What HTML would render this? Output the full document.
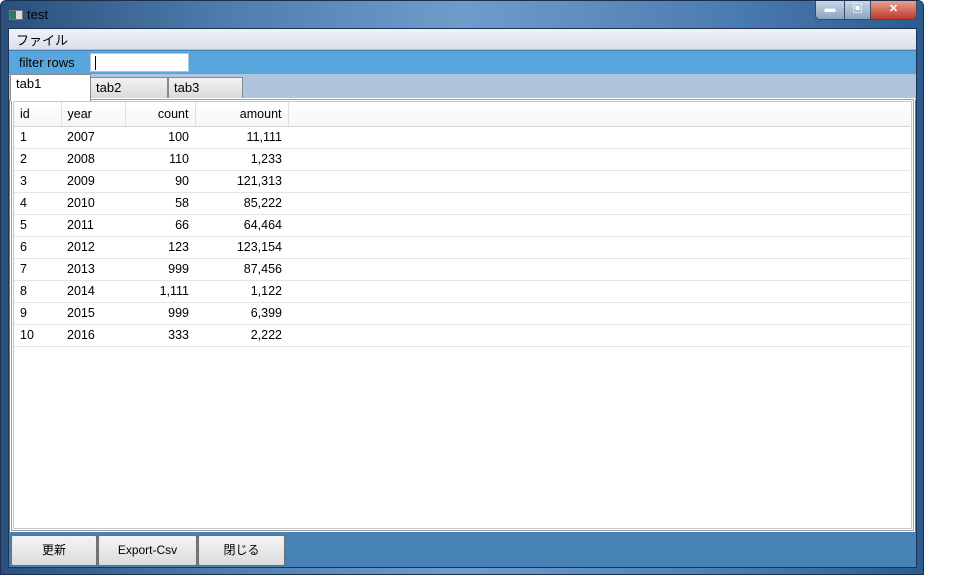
<!DOCTYPE html>
<html><head><meta charset="utf-8"><style>
*{margin:0;padding:0;box-sizing:border-box}
body{width:960px;height:575px;background:#fff;position:relative;overflow:hidden;font-family:"Liberation Sans","Noto Sans CJK JP",sans-serif;font-size:12px;color:#000}
.win{position:absolute;left:0;top:0;width:924px;height:575px;border-radius:6px 6px 0 0;background:linear-gradient(90deg,#2a4f7e 0%,#4f7eae 25%,#6f9ccb 50%,#4a7bb0 80%,#2c5a8e 100%);border:1px solid #1b2f4a}
.title{position:absolute;left:26px;top:6px;font-size:13px;color:#000}
.ico{position:absolute;left:8px;top:9px;width:14px;height:10px;background:linear-gradient(90deg,#2f7a5a 50%,#ddd 50%);border:1px solid #777}
.btns{position:absolute;left:814px;top:0;height:19px;display:flex;border:1px solid #3a4a60;border-top:none;border-radius:0 0 5px 5px;overflow:hidden}
.btns div{height:18px;color:#fff;font-size:11px;text-align:center;line-height:17px;font-weight:bold}
.client{position:absolute;left:7px;top:27px;width:909px;height:540px;background:#4682b4;border:1px solid #1c3552}
.menu{position:absolute;left:0;top:0;width:907px;height:21px;background:linear-gradient(#f0f2f8,#dce0ee);border-bottom:1px solid #b8c0d0;padding:1px 0 0 7px;font-size:13px}
.filter{position:absolute;left:0;top:22px;width:907px;height:24px;background:#57a6de}
.filter span{position:absolute;left:10px;top:4px;font-size:13px}
.filter .in{position:absolute;left:81px;top:2px;width:99px;height:19px;background:#fff;border:1px solid #a9c4dd}
.filter .in i{position:absolute;left:4px;top:2px;width:1px;height:14px;background:#000}
.tabs{position:absolute;left:0;top:45px;width:907px;height:26px;background:#b0c4de}
.tab{position:absolute;top:3px;height:23px;border:1px solid #8a8a8a;border-bottom:none;background:linear-gradient(#f2f2f2,#d8d8d8);font-size:13px;padding:2px 0 0 5px}
.panel{position:absolute;left:2px;top:70px;width:903px;height:432px;background:#fff;border:1px solid #a0a0a0;outline:1px solid #fff;}
.inner{position:absolute;left:1px;top:1px;right:1px;bottom:1px;border:1px solid #c8c8c8}
table{border-collapse:collapse;font-size:12.5px}
th,td{height:22px;font-weight:normal;border-bottom:1px solid #e4e4e4;padding:0 6px}
th{height:24px;background:linear-gradient(#fff,#f4f5f7);border-right:1px solid #e0e0e0;border-bottom:1px solid #d5d5d5}
.r{text-align:right}.l{text-align:left}
.fill{width:622px}
.bb{position:absolute;top:506px;height:31px;border:1px solid #707070;border-radius:2px;background:linear-gradient(#f4f4f4,#dcdcdc);text-align:center;line-height:28px;font-size:12px}
</style></head><body>
<div class="win">
<div class="ico"></div><div class="title">test</div>
<div class="btns">
<div style="width:28px;background:linear-gradient(#c9d6e6,#8aa4c4)">▬</div>
<div style="width:26px;background:linear-gradient(#c9d6e6,#8aa4c4);border-left:1px solid #3a4a60">▣</div>
<div style="width:46px;background:linear-gradient(#e8a090,#c0392b);border-left:1px solid #3a4a60">✕</div>
</div>
<div class="client">
<div class="menu">ファイル</div>
<div class="filter"><span>filter rows</span><div class="in"><i></i></div></div>
<div class="tabs">
<div class="tab" style="left:81px;width:78px;top:3px">tab2</div>
<div class="tab" style="left:159px;width:75px">tab3</div>
<div class="tab" style="left:1px;width:81px;top:0;height:27px;background:#fff;z-index:2;padding-top:1px">tab1</div>
</div>
<div class="panel"><div class="inner">
<table>
<tr><th class="l" style="width:47px">id</th><th class="l" style="width:64px">year</th><th class="r" style="width:70px">count</th><th class="r" style="width:93px">amount</th><th class="fill" style="border-right:none"></th></tr>
<tr><td>1</td><td>2007</td><td class="r">100</td><td class="r">11,111</td><td></td></tr>
<tr><td>2</td><td>2008</td><td class="r">110</td><td class="r">1,233</td><td></td></tr>
<tr><td>3</td><td>2009</td><td class="r">90</td><td class="r">121,313</td><td></td></tr>
<tr><td>4</td><td>2010</td><td class="r">58</td><td class="r">85,222</td><td></td></tr>
<tr><td>5</td><td>2011</td><td class="r">66</td><td class="r">64,464</td><td></td></tr>
<tr><td>6</td><td>2012</td><td class="r">123</td><td class="r">123,154</td><td></td></tr>
<tr><td>7</td><td>2013</td><td class="r">999</td><td class="r">87,456</td><td></td></tr>
<tr><td>8</td><td>2014</td><td class="r">1,111</td><td class="r">1,122</td><td></td></tr>
<tr><td>9</td><td>2015</td><td class="r">999</td><td class="r">6,399</td><td></td></tr>
<tr><td>10</td><td>2016</td><td class="r">333</td><td class="r">2,222</td><td></td></tr>
</table>
</div></div>
<div class="bb" style="left:2px;width:86px">更新</div>
<div class="bb" style="left:89px;width:99px">Export-Csv</div>
<div class="bb" style="left:189px;width:87px">閉じる</div>
</div>
</div>
</body></html>
